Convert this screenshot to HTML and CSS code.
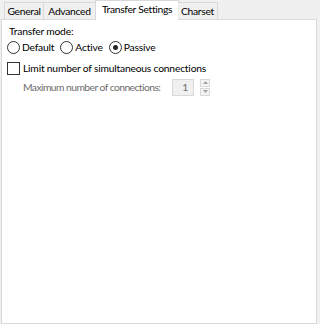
FILE: index.html
```html
<!DOCTYPE html>
<html>
<head>
<meta charset="utf-8">
<link rel="stylesheet" href="styles.css">
</head>
<body>
<div class="dialog">
  <div class="tabs">
    <div class="tab t-general">General</div>
    <div class="tab t-advanced">Advanced</div>
    <div class="tab active t-transfer">Transfer Settings</div>
    <div class="tab t-charset">Charset</div>
  </div>
  <div class="pane">
    <div class="label">Transfer mode:</div>
    <div class="radios">
      <label class="radio"><span class="rb"></span>Default</label>
      <label class="radio"><span class="rb"></span>Active</label>
      <label class="radio"><span class="rb on"></span>Passive</label>
    </div>
    <label class="check"><span class="cb"></span>Limit number of simultaneous connections</label>
    <div class="maxrow">
      <span class="maxlabel">Maximum number of connections:</span>
      <div class="spin">
        <div class="spinval">1</div>
        <div class="spinbtns">
          <div class="sb up"><svg width="5" height="3" viewBox="0 0 5 3"><path d="M2.5 0L5 3H0Z" fill="#a0a0a0"/></svg></div>
          <div class="sb down"><svg width="5" height="3" viewBox="0 0 5 3"><path d="M0 0H5L2.5 3Z" fill="#a0a0a0"/></svg></div>
        </div>
      </div>
    </div>
  </div>
</div>
</body>
</html>
```
FILE: styles.css
```css
html, body {
  margin: 0;
  padding: 0;
  background: #f0f0f0;
  width: 320px;
  height: 324px;
  overflow: hidden;
}
body {
  font-family: "Lato", "Noto Sans", sans-serif;
  font-size: 10.3px;
  letter-spacing: -0.2px;
  color: #000;
}
.dialog {
  padding: 0 3px 0 1px;
  height: 324px;
  display: flex;
  flex-direction: column;
}
.tabs {
  display: flex;
  padding-left: 3px;
  height: 19px;
  align-items: flex-end;
  position: relative;
  z-index: 1;
}
.tab {
  height: 17px;
  box-sizing: border-box;
  border: 1px solid #d9d9d9;
  border-bottom: none;
  border-left: none;
  background: #f0f0f0;
  line-height: 16px;
  color: #000;
  white-space: nowrap;
  text-align: center;
  letter-spacing: -0.3px;
}
.t-general { width: 40px; border-left: 1px solid #d9d9d9; }
.t-advanced { width: 52px; }
.t-transfer { width: 84px; }
.t-charset { width: 40px; }
.tab.active {
  height: 20px;
  margin-bottom: -1px;
  background: #fff;
  line-height: 17px;
  margin-left: -1px;
  margin-right: -1px;
  border-left: 1px solid #d9d9d9;
}
.pane {
  flex: 1;
  background: #fff;
  border: 1px solid #d9d9d9;
  padding: 4px 5px 2px;
}
.label { height: 15px; line-height: 15px; padding-left: 2px; }
.radios {
  display: flex;
  gap: 6px;
  margin-top: 0;
  height: 16px;
  align-items: center;
}
.radio, .check {
  display: flex;
  align-items: center;
  gap: 2px;
  white-space: nowrap;
}
.rb {
  width: 13px;
  height: 13px;
  border: 1px solid #333;
  border-radius: 50%;
  box-sizing: border-box;
  position: relative;
  background: #fff;
}
.rb.on::after {
  content: "";
  position: absolute;
  left: 3px; top: 3px;
  width: 5px; height: 5px;
  border-radius: 50%;
  background: #222;
}
.check { margin-top: 5px; height: 16px; }
.cb {
  width: 13px; height: 13px;
  border: 1px solid #333;
  box-sizing: border-box;
  background: #fff;
  margin-right: 1px;
}
.maxrow {
  display: flex;
  align-items: center;
  margin-top: 2px;
  padding-left: 16px;
  height: 18px;
  color: #6d6d6d;
  white-space: nowrap;
}
.maxlabel { flex: 0 0 149px; letter-spacing: -0.55px; }
.spin {
  display: flex;
  align-items: center;
  gap: 6px;
}
.spinval {
  width: 22px;
  height: 17px;
  box-sizing: border-box;
  border: 1px solid #d9d9d9;
  background: #f0f0f0;
  text-align: right;
  padding-right: 5px;
  line-height: 15px;
  color: #6d6d6d;
}
.spinbtns {
  display: flex;
  flex-direction: column;
  gap: 1px;
}
.sb {
  width: 10px;
  height: 8px;
  box-sizing: border-box;
  border: 1px solid #d9d9d9;
  background: #f4f4f4;
  display: flex;
  align-items: center;
  justify-content: center;
}
```
